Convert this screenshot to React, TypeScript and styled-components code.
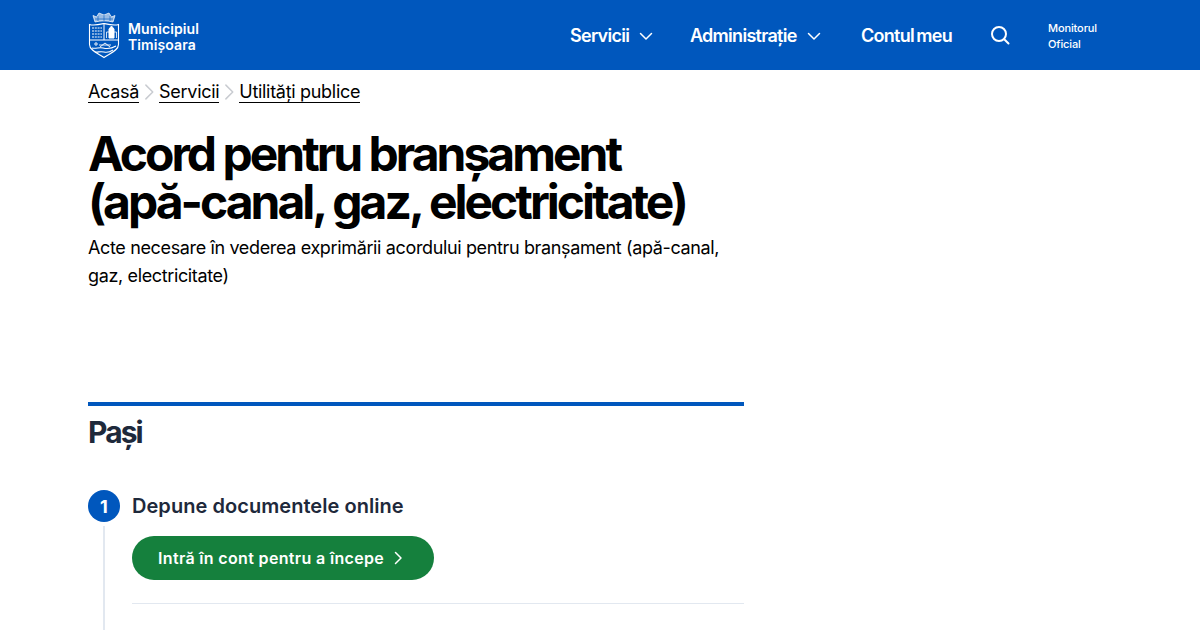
import React from "react";
import styled, { createGlobalStyle } from "styled-components";

const Global = createGlobalStyle`
  html, body { margin: 0; padding: 0; background: #fff; }
  body { font-family: Inter, "Liberation Sans", sans-serif; color: #000; overflow: hidden; height: 630px; }
  * { box-sizing: border-box; }
`;
const Header = styled.header`
  height: 70px; background: #0057bd; padding: 0 88px; display: flex; align-items: center; justify-content: space-between; color: #fff;
`;
const Brand = styled.a`display: flex; align-items: center; gap: 8px;`;
const BrandName = styled.div`font-size: 14px; line-height: 16px; font-weight: 600; letter-spacing: 0.08px; padding-top: 3px;`;
const Nav = styled.nav`display: flex; align-items: center;`;
const NavItem = styled.a<{ $w: number }>`
  display: flex; align-items: center; width: ${p => p.$w}px; font-size: 18px; font-weight: 600; letter-spacing: -0.72px; word-spacing: -1.5px; gap: 9px; padding-top: 1px;
`;
const SearchBtn = styled.span<{ $w: number }>`display: flex; width: ${p => p.$w}px;`;
const Monitor = styled.div`width: 64px; font-size: 11px; line-height: 16px; font-weight: 500; letter-spacing: -0.12px; padding-top: 2px;`;
const Main = styled.main`width: 656px; margin-left: 88px;`;
const Crumbs = styled.div`display: flex; align-items: center; height: 44px; font-size: 18px; letter-spacing: -0.3px;`;
const Crumb = styled.a`color: #000; line-height: 20px; border-bottom: 1px solid #000;`;
const Title = styled.h1`margin: 16px 0 0; max-width: 640px; font-size: 48px; line-height: 48px; font-weight: 700; letter-spacing: -3px;`;
const Lead = styled.p`margin: 8px 0 0; font-size: 18px; line-height: 28px; letter-spacing: -0.36px;`;
const Section = styled.section`margin-top: 112px; border-top: 4px solid #0057bd;`;
const H2 = styled.h2`margin: 8px 0 0; font-size: 30px; line-height: 36px; font-weight: 700; letter-spacing: -1.9px; color: #1e293b;`;
const Step = styled.div`display: grid; grid-template-columns: 32px 1fr; column-gap: 12px; margin-top: 40px;`;
const Rail = styled.div`display: flex; flex-direction: column; align-items: center; gap: 4px;`;
const Dot = styled.div`width: 32px; height: 32px; border-radius: 50%; background: #0057bd; color: #fff; font-weight: 700; font-size: 18px; display: flex; align-items: center; justify-content: center;`;
const Line = styled.div`width: 2px; height: 104px; background: #e2e8f0;`;
const StepTitle = styled.h3`margin: 0; font-size: 20px; line-height: 32px; font-weight: 600; letter-spacing: 0.05px; color: #1e293b;`;
const Cta = styled.a`
  margin-top: 14px; height: 44px; width: 302px; border-radius: 22px; background: #15803d; color: #fff; display: flex; align-items: center; padding-left: 26px; gap: 6px;
  font-size: 16px; font-weight: 600; letter-spacing: 0.34px;
`;
const Rule = styled.hr`margin: 23px 0 0; border: 0; border-top: 1px solid #e2e8f0;`;

const Chevron = ({ size = 16, dir = "down", color = "#fff", sw = 1.5 }: { size?: number; dir?: string; color?: string; sw?: number }) => (
  <svg width={size} height={size} viewBox="0 0 16 16" fill="none" stroke={color} strokeWidth={sw} strokeLinecap="round" strokeLinejoin="round">
    {dir === "down" ? <path d="M2.500 5.500 8 11l5.500-5.500" /> : <path d="M5.500 2.500 11 8l-5.500 5.500" />}
  </svg>
);

const Crest = () => (
  <svg width="32" height="48" viewBox="0 0 32 48" fill="none" stroke="#fff" strokeWidth="1">
    <path d="M7 11 5 4.500l3.500 1.500L11 2l5 2 5-2 2.500 4L27 4.500 25 11c-5-1.500-13-1.500-18 0Z" fill="#fff" fillOpacity=".6" strokeWidth=".7" />
    <path d="M7 8h18M10 5v5M16 4v6M22 5v5" stroke="#0057bd" strokeWidth=".6" />
    <path d="M1.500 13.500c4 1.500 8 .5 14.500-1 6.500 1.500 10.500 2.500 14.500 1v20c0 6-9 9-14.500 13C10.500 42.500 1.500 39.500 1.500 33.500Z" strokeWidth="1.100" />
    <path d="M16 13v16M1.500 29h29" strokeWidth="1" />
    <path d="M4 17h10M4 20h10M4 23h10M4 26h10" strokeWidth="1.100" strokeDasharray="2 .8" />
    <path d="M21 27v-9l2.500-3 2.500 3v9Z" fill="#fff" />
    <path d="M18.500 27v-6h10v6" strokeWidth=".8" />
    <circle cx="8" cy="33" r="1.200" />
    <path d="M12 36l5-4 5 4M11 34h12" strokeWidth=".9" />
    <path d="M4 37c4 1 7-1 11 0s8 1 13-2M7 41c3 .5 5-1 9 0s6 0 9-2" strokeWidth="1.100" />
  </svg>
);

export default function App() {
  return (
    <>
      <Global />
      <Header>
        <Brand>
          <Crest />
          <BrandName>Municipiul<br />Timișoara</BrandName>
        </Brand>
        <Nav>
          <NavItem $w={120}>Servicii <Chevron /></NavItem>
          <NavItem $w={171}>Administrație <Chevron /></NavItem>
          <NavItem $w={129}>Contul meu</NavItem>
          <SearchBtn $w={58}>
            <svg width="20" height="20" viewBox="0 0 20 20" fill="none" stroke="#fff" strokeWidth="2" strokeLinecap="round">
              <circle cx="9" cy="9" r="7" /><path d="m14.200 14.200 4.300 4.300" />
            </svg>
          </SearchBtn>
          <Monitor>Monitorul<br />Oficial</Monitor>
        </Nav>
      </Header>
      <Main>
        <Crumbs>
          <Crumb>Acasă</Crumb>
          <Chevron size={20} dir="right" color="#c9ccd1" sw={1.2} />
          <Crumb>Servicii</Crumb>
          <Chevron size={20} dir="right" color="#c9ccd1" sw={1.2} />
          <Crumb>Utilități publice</Crumb>
        </Crumbs>
        <Title>Acord pentru branșament (apă-canal, gaz, electricitate)</Title>
        <Lead>Acte necesare în vederea exprimării acordului pentru branșament (apă-canal, gaz, electricitate)</Lead>
        <Section>
          <H2>Pași</H2>
          <Step>
            <Rail><Dot>1</Dot><Line /></Rail>
            <div>
              <StepTitle>Depune documentele online</StepTitle>
              <Cta>Intră în cont pentru a începe <Chevron dir="right" /></Cta>
              <Rule />
            </div>
          </Step>
        </Section>
      </Main>
    </>
  );
}
